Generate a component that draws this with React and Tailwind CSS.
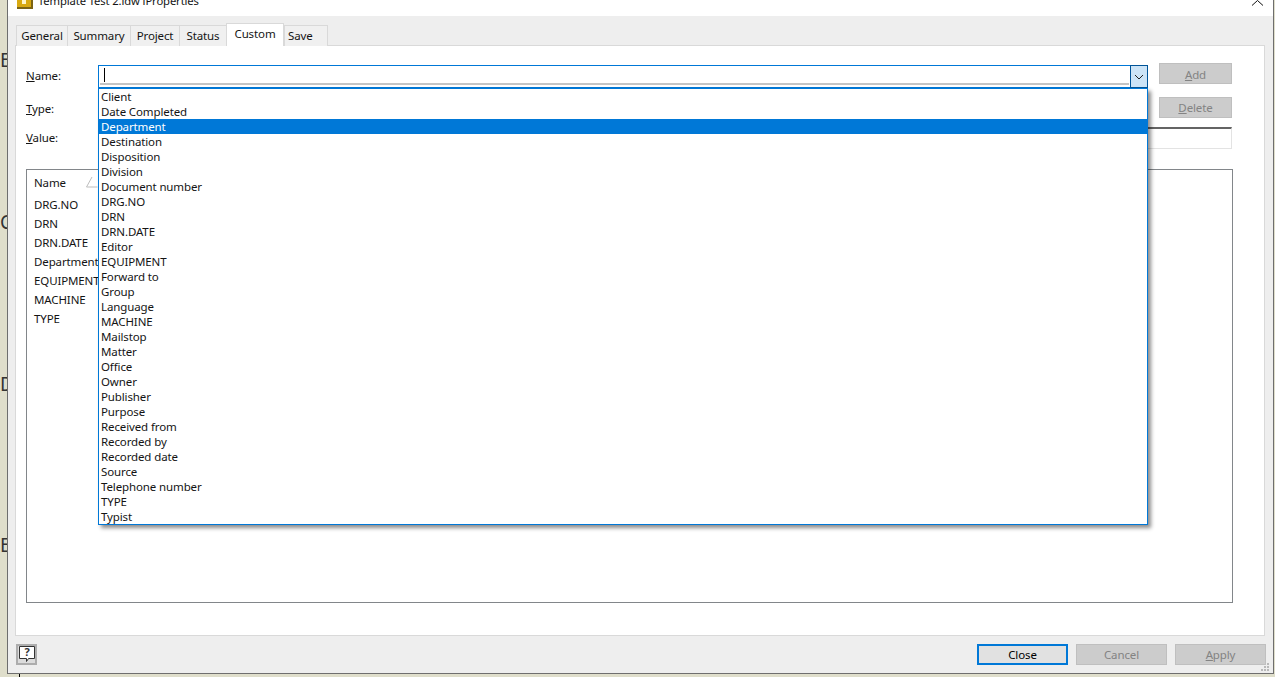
import React from "react";

const font = { fontFamily: '"Noto Sans", "Open Sans", sans-serif' };

const tabs = [
  ["General", "w-[51px] justify-center"],
  ["Summary", "w-[63px] justify-center"],
  ["Project", "w-[49px] justify-center"],
  ["Status", "w-[47px] justify-center"],
  ["Custom", "w-[58px] justify-center"],
  ["Save", "w-[44px] pl-[3px]"],
];

const options = [
  "Client", "Date Completed", "Department", "Destination", "Disposition", "Division", "Document number",
  "DRG.NO", "DRN", "DRN.DATE", "Editor", "EQUIPMENT", "Forward to", "Group", "Language", "MACHINE",
  "Mailstop", "Matter", "Office", "Owner", "Publisher", "Purpose", "Received from", "Recorded by",
  "Recorded date", "Source", "Telephone number", "TYPE", "Typist",
];

const rows = ["DRG.NO", "DRN", "DRN.DATE", "Department", "EQUIPMENT", "MACHINE", "TYPE"];

function DisabledButton({ children, className }) {
  return (
    <div className={"flex items-center justify-center h-[21px] bg-[#cccccc] border border-[#bfbfbf] text-[#838383] " + className}>
      <span>{children}</span>
    </div>
  );
}

function Label({ children, className }) {
  return <div className={"w-[72px] shrink-0 " + (className || "")}>{children}</div>;
}

export default function App() {
  return (
    <div style={font} className="relative flex w-[1275px] h-[677px] overflow-hidden bg-[#dfdecb] text-[11.5px] leading-[15px] tracking-[-0.12px] text-[#141414]">
      <div className="w-[7px] shrink-0 overflow-hidden pt-[51px] text-[19px] leading-[18px] text-[#333333]">
        <div className="h-[162px]">E</div>
        <div className="h-[162px]">C</div>
        <div className="h-[161px]">D</div>
        <div className="h-[162px]">E</div>
      </div>

      <div className="relative flex flex-col w-[1267px] h-[674px] bg-[#eeeeee] border-r border-b border-l border-[#6e6e6e]">
        <div className="relative flex h-[16px] shrink-0 bg-white overflow-hidden">
          <svg className="ml-[9px] shrink-0" width="16" height="9" viewBox="0 0 16 9">
            <rect x="0" y="-6" width="16" height="15" fill="#7c6413" />
            <rect x="0" y="-6" width="14" height="13" fill="#d8a910" />
            <rect x="5" y="-3" width="4" height="7" fill="#fff6c8" />
          </svg>
          <div className="ml-[5px] -mt-[7px] text-[11.25px]">Template Test 2.ldw iProperties</div>
          <svg className="absolute right-[8px] top-0" width="14" height="6" viewBox="0 0 14 6">
            <path d="M1 5.5 L6.5 0.5 L12 5.5" fill="none" stroke="#111111" strokeWidth="1" />
          </svg>
        </div>

        <div className="relative z-10 flex items-end h-[30px] shrink-0 pl-[8px] -mb-px">
          {tabs.map(([t, w]) =>
            t === "Custom" ? (
              <div key={t} className={"flex h-[23px] pt-[2px] bg-white border-t border-l border-r border-[#d9d9d9] " + w}>
                {t}
              </div>
            ) : (
              <div key={t} className={"flex h-[21px] pt-[2px] bg-[#f0f0f0] border-t border-l border-[#d9d9d9] last:border-r " + w}>
                {t}
              </div>
            )
          )}
        </div>

        <div className="flex flex-col h-[591px] shrink-0 ml-[7px] mr-[8px] bg-white border border-[#d9d9d9] pt-[18px] pl-[10px] pr-[32px]">
          <div className="relative z-20 flex h-[24px] shrink-0">
            <Label className="pt-[4px]"><u>N</u>ame:</Label>
            <div className="relative flex w-[1050px] h-[23px] mt-px border border-[#0078d7] bg-white">
              <div className="relative flex-1">
                <div className="absolute left-[5px] top-[2px] w-px h-[14px] bg-black" />
                <div className="absolute left-[1px] right-[1px] bottom-[2px] h-[2px] bg-[#c4c4c4]" />
              </div>
              <div className="flex items-center justify-center w-[18px] -my-px -mr-px bg-[#cce4f7] border border-[#005499]">
                <svg width="10" height="6" viewBox="0 0 10 6">
                  <path d="M1 1 L5 5 L9 1" fill="none" stroke="#222222" strokeWidth="1" />
                </svg>
              </div>
              <div className="absolute -left-px top-[calc(100%+1px)] w-[1050px] border border-[#0078d7] bg-white shadow-[3px_3px_4px_rgba(0,0,0,0.45)]">
                {options.map((o) => (
                  <div key={o} className={"h-[15px] pl-[2px] leading-[15px] " + (o === "Department" ? "bg-[#0078d7] text-white" : "")}>
                    {o}
                  </div>
                ))}
              </div>
            </div>
            <DisabledButton className="w-[73px] ml-[11px] -mt-px pt-[2px]"><u>A</u>dd</DisabledButton>
          </div>

          <div className="flex justify-between h-[21px] mt-[9px] shrink-0">
            <Label className="pt-[4px]"><u>T</u>ype:</Label>
            <DisabledButton className="w-[73px]"><u>D</u>elete</DisabledButton>
          </div>

          <div className="flex h-[22px] mt-[9px] shrink-0">
            <Label className="pt-[3px]"><u>V</u>alue:</Label>
            <div className="flex-1 border border-[#e3e3e3] border-t-2 border-t-[#646464]" />
          </div>

          <div className="flex flex-col h-[434px] mt-[20px] -mr-px shrink-0 border border-[#82868a] pl-[7px] overflow-hidden">
            <div className="relative h-[24px] shrink-0 pt-[5px]">
              Name
              <svg className="absolute left-[52px] top-[6px]" width="12" height="12" viewBox="0 0 12 12">
                <path d="M6 1 L0.5 11 L11.5 11" fill="none" stroke="#bdbdbd" strokeWidth="1" />
              </svg>
            </div>
            {rows.map((r) => (
              <div key={r} className="h-[19px] shrink-0 leading-[19px] pt-px">{r}</div>
            ))}
          </div>
        </div>

        <div className="flex justify-between flex-1 pt-[8px] pl-[8px] pr-[7px]">
          <div className="flex items-center justify-center w-[21px] h-[21px] bg-[#dcdcdc] border-2 border-[#adadad]">
            <svg width="16" height="17" viewBox="0 0 16 17" className="relative">
              <path d="M0.5 0.5 H15.5 V12.5 H9.5 L7.5 15.5 V12.5 H0.5 Z" fill="#ffffff" stroke="#333333" strokeWidth="1" />
              <text x="8" y="10" textAnchor="middle" fontSize="11" fontWeight="700" fill="#333333" style={font}>?</text>
            </svg>
          </div>
          <div className="flex gap-[8px]">
            <div className="flex items-center justify-center w-[91px] h-[21px] bg-[#e1e1e1] border-2 border-[#0078d7] text-black">Close</div>
            <DisabledButton className="w-[91px]">Cancel</DisabledButton>
            <DisabledButton className="w-[91px]"><u>A</u>pply</DisabledButton>
          </div>
        </div>

        <svg className="absolute right-[3px] bottom-[1px]" width="9" height="9" viewBox="0 0 9 9" fill="#b8b8b8">
          <rect x="6" y="0" width="2" height="2" />
          <rect x="3" y="3" width="2" height="2" />
          <rect x="6" y="3" width="2" height="2" />
          <rect x="0" y="6" width="2" height="2" />
          <rect x="3" y="6" width="2" height="2" />
          <rect x="6" y="6" width="2" height="2" />
        </svg>
      </div>

      <div className="absolute left-[19px] top-[674px] w-px h-[3px] bg-black" />
    </div>
  );
}
